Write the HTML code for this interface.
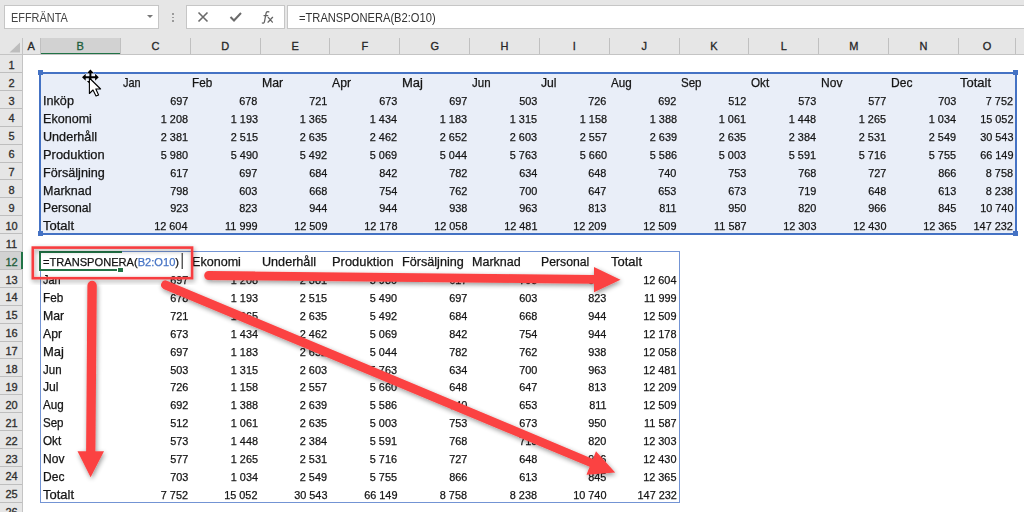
<!DOCTYPE html>
<html><head><meta charset="utf-8"><style>
html,body{margin:0;padding:0;}
body{width:1024px;height:512px;overflow:hidden;position:relative;background:#fff;font-family:"Liberation Sans",sans-serif;}
.a{position:absolute;}
.t{position:absolute;white-space:pre;font-size:12.2px;line-height:16px;color:#141414;-webkit-text-stroke-width:0.25px;}
.hd{position:absolute;font-size:11px;line-height:16px;color:#262626;text-align:center;-webkit-text-stroke-width:0.3px;}
</style></head><body>

<div class="a" style="left:0;top:0;width:1024px;height:54px;background:#e6e6e6"></div>
<div class="a" style="left:4px;top:5px;width:153px;height:22px;background:#fff;border:1px solid #c6c6c6"></div>
<div class="a" style="left:11px;top:9.5px;font-size:12.2px;line-height:16px;color:#444;white-space:pre;transform:scaleX(0.895);transform-origin:0 0">EFFRÄNTA</div>
<div class="a" style="left:147px;top:14.5px;width:0;height:0;border-left:3px solid transparent;border-right:3px solid transparent;border-top:3px solid #777"></div>
<div class="a" style="left:172px;top:13px;width:1.5px;height:1.5px;background:#9a9a9a"></div>
<div class="a" style="left:172px;top:16.5px;width:1.5px;height:1.5px;background:#9a9a9a"></div>
<div class="a" style="left:172px;top:20px;width:1.5px;height:1.5px;background:#9a9a9a"></div>
<div class="a" style="left:186px;top:5px;width:97px;height:22px;background:#fff;border:1px solid #c6c6c6"></div>
<svg class="a" style="left:196px;top:11px" width="14" height="12" viewBox="0 0 14 12"><path d="M2.5 1.5 L11.5 10.5 M11.5 1.5 L2.5 10.5" stroke="#6a6a6a" stroke-width="1.6" fill="none"/></svg>
<svg class="a" style="left:229px;top:11px" width="14" height="12" viewBox="0 0 14 12"><path d="M1.5 6 L5 9.5 L12 2" stroke="#6a6a6a" stroke-width="2" fill="none"/></svg>
<svg class="a" style="left:261px;top:10px" width="14" height="14" viewBox="0 0 14 14"><path d="M7.8 1.9 C6.4 1.2 5.3 1.9 5 3.6 L3.5 11.6 C3.2 13 2.4 13.4 1.3 13 M3 5.5 L6.8 5.5" stroke="#636363" stroke-width="1.25" fill="none" stroke-linecap="round"/><path d="M7.2 7.3 L11.4 12.2 M11.6 7.3 L7 12.2" stroke="#636363" stroke-width="1.25" fill="none" stroke-linecap="round"/></svg>
<div class="a" style="left:287px;top:5px;width:740px;height:22px;background:#fff;border:1px solid #c6c6c6"></div>
<div class="a" style="left:298.5px;top:9.5px;font-size:12.2px;line-height:16px;color:#333;white-space:pre;transform:scaleX(0.915);transform-origin:0 0">=TRANSPONERA(B2:O10)</div>
<div class="a" style="left:40px;top:37.5px;width:80.5px;height:16.5px;background:#d2d2d2"></div>
<div class="a" style="left:40px;top:53px;width:80.5px;height:2px;background:#217346"></div>
<div class="hd" style="left:22.40px;width:17.60px;top:38.0px;color:#262626">A</div>
<div class="hd" style="left:40.00px;width:80.50px;top:38.0px;color:#1d5c3a">B</div>
<div class="hd" style="left:120.50px;width:69.83px;top:38.0px;color:#262626">C</div>
<div class="hd" style="left:190.33px;width:69.83px;top:38.0px;color:#262626">D</div>
<div class="hd" style="left:260.16px;width:69.83px;top:38.0px;color:#262626">E</div>
<div class="hd" style="left:329.99px;width:69.83px;top:38.0px;color:#262626">F</div>
<div class="hd" style="left:399.82px;width:69.83px;top:38.0px;color:#262626">G</div>
<div class="hd" style="left:469.65px;width:69.83px;top:38.0px;color:#262626">H</div>
<div class="hd" style="left:539.48px;width:69.83px;top:38.0px;color:#262626">I</div>
<div class="hd" style="left:609.31px;width:69.83px;top:38.0px;color:#262626">J</div>
<div class="hd" style="left:679.14px;width:69.83px;top:38.0px;color:#262626">K</div>
<div class="hd" style="left:748.97px;width:69.83px;top:38.0px;color:#262626">L</div>
<div class="hd" style="left:818.80px;width:69.83px;top:38.0px;color:#262626">M</div>
<div class="hd" style="left:888.63px;width:69.83px;top:38.0px;color:#262626">N</div>
<div class="hd" style="left:958.46px;width:57.04px;top:38.0px;color:#262626">O</div>
<div class="a" style="left:39.50px;top:37.5px;width:1px;height:16.5px;background:#c0c0c0"></div>
<div class="a" style="left:120.00px;top:37.5px;width:1px;height:16.5px;background:#c0c0c0"></div>
<div class="a" style="left:189.83px;top:37.5px;width:1px;height:16.5px;background:#c0c0c0"></div>
<div class="a" style="left:259.66px;top:37.5px;width:1px;height:16.5px;background:#c0c0c0"></div>
<div class="a" style="left:329.49px;top:37.5px;width:1px;height:16.5px;background:#c0c0c0"></div>
<div class="a" style="left:399.32px;top:37.5px;width:1px;height:16.5px;background:#c0c0c0"></div>
<div class="a" style="left:469.15px;top:37.5px;width:1px;height:16.5px;background:#c0c0c0"></div>
<div class="a" style="left:538.98px;top:37.5px;width:1px;height:16.5px;background:#c0c0c0"></div>
<div class="a" style="left:608.81px;top:37.5px;width:1px;height:16.5px;background:#c0c0c0"></div>
<div class="a" style="left:678.64px;top:37.5px;width:1px;height:16.5px;background:#c0c0c0"></div>
<div class="a" style="left:748.47px;top:37.5px;width:1px;height:16.5px;background:#c0c0c0"></div>
<div class="a" style="left:818.30px;top:37.5px;width:1px;height:16.5px;background:#c0c0c0"></div>
<div class="a" style="left:888.13px;top:37.5px;width:1px;height:16.5px;background:#c0c0c0"></div>
<div class="a" style="left:957.96px;top:37.5px;width:1px;height:16.5px;background:#c0c0c0"></div>
<div class="a" style="left:1015.00px;top:37.5px;width:1px;height:16.5px;background:#c0c0c0"></div>
<div class="a" style="left:0;top:54px;width:1024px;height:1px;background:#c4c4c4"></div>
<svg class="a" style="left:9px;top:42px" width="12" height="11" viewBox="0 0 12 11"><path d="M11 0.5 L11 10.5 L0.5 10.5 Z" fill="#bdbdbd"/></svg>
<div class="a" style="left:0;top:55px;width:22px;height:457px;background:#e6e6e6"></div>
<div class="a" style="left:22px;top:37.5px;width:1px;height:475px;background:#c4c4c4"></div>
<div class="a" style="left:0;top:251.50px;width:22px;height:17.90px;background:#d2d2d2"></div>
<div class="a" style="left:20.5px;top:251.50px;width:2px;height:17.90px;background:#217346"></div>
<div class="a" style="left:0;top:72.00px;width:22px;height:1px;background:#bebebe"></div>
<div class="hd" style="left:0.5px;width:22px;top:56.70px;color:#2e2e2e">1</div>
<div class="a" style="left:0;top:89.90px;width:22px;height:1px;background:#bebebe"></div>
<div class="hd" style="left:0.5px;width:22px;top:74.60px;color:#2e2e2e">2</div>
<div class="a" style="left:0;top:107.80px;width:22px;height:1px;background:#bebebe"></div>
<div class="hd" style="left:0.5px;width:22px;top:92.50px;color:#2e2e2e">3</div>
<div class="a" style="left:0;top:125.70px;width:22px;height:1px;background:#bebebe"></div>
<div class="hd" style="left:0.5px;width:22px;top:110.40px;color:#2e2e2e">4</div>
<div class="a" style="left:0;top:143.60px;width:22px;height:1px;background:#bebebe"></div>
<div class="hd" style="left:0.5px;width:22px;top:128.30px;color:#2e2e2e">5</div>
<div class="a" style="left:0;top:161.50px;width:22px;height:1px;background:#bebebe"></div>
<div class="hd" style="left:0.5px;width:22px;top:146.20px;color:#2e2e2e">6</div>
<div class="a" style="left:0;top:179.40px;width:22px;height:1px;background:#bebebe"></div>
<div class="hd" style="left:0.5px;width:22px;top:164.10px;color:#2e2e2e">7</div>
<div class="a" style="left:0;top:197.30px;width:22px;height:1px;background:#bebebe"></div>
<div class="hd" style="left:0.5px;width:22px;top:182.00px;color:#2e2e2e">8</div>
<div class="a" style="left:0;top:215.20px;width:22px;height:1px;background:#bebebe"></div>
<div class="hd" style="left:0.5px;width:22px;top:199.90px;color:#2e2e2e">9</div>
<div class="a" style="left:0;top:233.10px;width:22px;height:1px;background:#bebebe"></div>
<div class="hd" style="left:0.5px;width:22px;top:217.80px;color:#2e2e2e">10</div>
<div class="a" style="left:0;top:251.00px;width:22px;height:1px;background:#bebebe"></div>
<div class="hd" style="left:0.5px;width:22px;top:235.70px;color:#2e2e2e">11</div>
<div class="a" style="left:0;top:268.90px;width:22px;height:1px;background:#bebebe"></div>
<div class="hd" style="left:0.5px;width:22px;top:253.60px;color:#1d5c3a">12</div>
<div class="a" style="left:0;top:286.80px;width:22px;height:1px;background:#bebebe"></div>
<div class="hd" style="left:0.5px;width:22px;top:271.50px;color:#2e2e2e">13</div>
<div class="a" style="left:0;top:304.70px;width:22px;height:1px;background:#bebebe"></div>
<div class="hd" style="left:0.5px;width:22px;top:289.40px;color:#2e2e2e">14</div>
<div class="a" style="left:0;top:322.60px;width:22px;height:1px;background:#bebebe"></div>
<div class="hd" style="left:0.5px;width:22px;top:307.30px;color:#2e2e2e">15</div>
<div class="a" style="left:0;top:340.50px;width:22px;height:1px;background:#bebebe"></div>
<div class="hd" style="left:0.5px;width:22px;top:325.20px;color:#2e2e2e">16</div>
<div class="a" style="left:0;top:358.40px;width:22px;height:1px;background:#bebebe"></div>
<div class="hd" style="left:0.5px;width:22px;top:343.10px;color:#2e2e2e">17</div>
<div class="a" style="left:0;top:376.30px;width:22px;height:1px;background:#bebebe"></div>
<div class="hd" style="left:0.5px;width:22px;top:361.00px;color:#2e2e2e">18</div>
<div class="a" style="left:0;top:394.20px;width:22px;height:1px;background:#bebebe"></div>
<div class="hd" style="left:0.5px;width:22px;top:378.90px;color:#2e2e2e">19</div>
<div class="a" style="left:0;top:412.10px;width:22px;height:1px;background:#bebebe"></div>
<div class="hd" style="left:0.5px;width:22px;top:396.80px;color:#2e2e2e">20</div>
<div class="a" style="left:0;top:430.00px;width:22px;height:1px;background:#bebebe"></div>
<div class="hd" style="left:0.5px;width:22px;top:414.70px;color:#2e2e2e">21</div>
<div class="a" style="left:0;top:447.90px;width:22px;height:1px;background:#bebebe"></div>
<div class="hd" style="left:0.5px;width:22px;top:432.60px;color:#2e2e2e">22</div>
<div class="a" style="left:0;top:465.80px;width:22px;height:1px;background:#bebebe"></div>
<div class="hd" style="left:0.5px;width:22px;top:450.50px;color:#2e2e2e">23</div>
<div class="a" style="left:0;top:483.70px;width:22px;height:1px;background:#bebebe"></div>
<div class="hd" style="left:0.5px;width:22px;top:468.40px;color:#2e2e2e">24</div>
<div class="a" style="left:0;top:501.60px;width:22px;height:1px;background:#bebebe"></div>
<div class="hd" style="left:0.5px;width:22px;top:486.30px;color:#2e2e2e">25</div>
<div class="a" style="left:0;top:519.50px;width:22px;height:1px;background:#bebebe"></div>
<div class="hd" style="left:0.5px;width:22px;top:504.20px;color:#2e2e2e">26</div>
<div class="a" style="left:40.00px;top:72.50px;width:975.50px;height:161.10px;background:#e9eef8"></div>
<div class="a" style="left:39.00px;top:71.50px;width:977.50px;height:2px;background:#4472c4"></div>
<div class="a" style="left:39.00px;top:232.60px;width:977.50px;height:2px;background:#4472c4"></div>
<div class="a" style="left:39.00px;top:71.50px;width:2px;height:163.10px;background:#4472c4"></div>
<div class="a" style="left:1014.50px;top:71.50px;width:2px;height:163.10px;background:#4472c4"></div>
<div class="a" style="left:37.50px;top:70.00px;width:5px;height:5px;background:#4472c4"></div>
<div class="a" style="left:1013.00px;top:70.00px;width:5px;height:5px;background:#4472c4"></div>
<div class="a" style="left:37.50px;top:231.10px;width:5px;height:5px;background:#4472c4"></div>
<div class="a" style="left:1013.00px;top:231.10px;width:5px;height:5px;background:#4472c4"></div>
<div class="t" style="top:75.10px;left:122.50px;transform:scaleX(0.896);transform-origin:0 0;">Jan</div>
<div class="t" style="top:75.10px;left:192.33px;transform:scaleX(0.962);transform-origin:0 0;">Feb</div>
<div class="t" style="top:75.10px;left:262.16px;transform:scaleX(1.007);transform-origin:0 0;">Mar</div>
<div class="t" style="top:75.10px;left:331.99px;transform:scaleX(1.002);transform-origin:0 0;">Apr</div>
<div class="t" style="top:75.10px;left:401.82px;transform:scaleX(1.065);transform-origin:0 0;">Maj</div>
<div class="t" style="top:75.10px;left:471.65px;transform:scaleX(0.944);transform-origin:0 0;">Jun</div>
<div class="t" style="top:75.10px;left:541.48px;transform:scaleX(0.999);transform-origin:0 0;">Jul</div>
<div class="t" style="top:75.10px;left:611.31px;transform:scaleX(0.956);transform-origin:0 0;">Aug</div>
<div class="t" style="top:75.10px;left:681.14px;transform:scaleX(0.947);transform-origin:0 0;">Sep</div>
<div class="t" style="top:75.10px;left:750.97px;transform:scaleX(0.96);transform-origin:0 0;">Okt</div>
<div class="t" style="top:75.10px;left:820.80px;transform:scaleX(0.987);transform-origin:0 0;">Nov</div>
<div class="t" style="top:75.10px;left:890.63px;transform:scaleX(0.987);transform-origin:0 0;">Dec</div>
<div class="t" style="top:75.10px;left:960.46px;transform:scaleX(1.065);transform-origin:0 0;">Totalt</div>
<div class="t" style="top:93.00px;left:43.00px;transform:scaleX(1.037);transform-origin:0 0;">Inköp</div>
<div class="t" style="top:93.00px;right:836.17px;transform:scaleX(0.939);transform-origin:100% 0;font-size:11.6px;">697</div>
<div class="t" style="top:93.00px;right:766.34px;transform:scaleX(0.939);transform-origin:100% 0;font-size:11.6px;">678</div>
<div class="t" style="top:93.00px;right:696.51px;transform:scaleX(0.939);transform-origin:100% 0;font-size:11.6px;">721</div>
<div class="t" style="top:93.00px;right:626.68px;transform:scaleX(0.939);transform-origin:100% 0;font-size:11.6px;">673</div>
<div class="t" style="top:93.00px;right:556.85px;transform:scaleX(0.939);transform-origin:100% 0;font-size:11.6px;">697</div>
<div class="t" style="top:93.00px;right:487.02px;transform:scaleX(0.939);transform-origin:100% 0;font-size:11.6px;">503</div>
<div class="t" style="top:93.00px;right:417.19px;transform:scaleX(0.939);transform-origin:100% 0;font-size:11.6px;">726</div>
<div class="t" style="top:93.00px;right:347.36px;transform:scaleX(0.939);transform-origin:100% 0;font-size:11.6px;">692</div>
<div class="t" style="top:93.00px;right:277.53px;transform:scaleX(0.939);transform-origin:100% 0;font-size:11.6px;">512</div>
<div class="t" style="top:93.00px;right:207.70px;transform:scaleX(0.939);transform-origin:100% 0;font-size:11.6px;">573</div>
<div class="t" style="top:93.00px;right:137.87px;transform:scaleX(0.939);transform-origin:100% 0;font-size:11.6px;">577</div>
<div class="t" style="top:93.00px;right:68.04px;transform:scaleX(0.939);transform-origin:100% 0;font-size:11.6px;">703</div>
<div class="t" style="top:93.00px;right:11.00px;transform:scaleX(0.939);transform-origin:100% 0;font-size:11.6px;">7&#160;752</div>
<div class="t" style="top:110.90px;left:43.00px;transform:scaleX(1.031);transform-origin:0 0;">Ekonomi</div>
<div class="t" style="top:110.90px;right:836.17px;transform:scaleX(0.939);transform-origin:100% 0;font-size:11.6px;">1&#160;208</div>
<div class="t" style="top:110.90px;right:766.34px;transform:scaleX(0.939);transform-origin:100% 0;font-size:11.6px;">1&#160;193</div>
<div class="t" style="top:110.90px;right:696.51px;transform:scaleX(0.939);transform-origin:100% 0;font-size:11.6px;">1&#160;365</div>
<div class="t" style="top:110.90px;right:626.68px;transform:scaleX(0.939);transform-origin:100% 0;font-size:11.6px;">1&#160;434</div>
<div class="t" style="top:110.90px;right:556.85px;transform:scaleX(0.939);transform-origin:100% 0;font-size:11.6px;">1&#160;183</div>
<div class="t" style="top:110.90px;right:487.02px;transform:scaleX(0.939);transform-origin:100% 0;font-size:11.6px;">1&#160;315</div>
<div class="t" style="top:110.90px;right:417.19px;transform:scaleX(0.939);transform-origin:100% 0;font-size:11.6px;">1&#160;158</div>
<div class="t" style="top:110.90px;right:347.36px;transform:scaleX(0.939);transform-origin:100% 0;font-size:11.6px;">1&#160;388</div>
<div class="t" style="top:110.90px;right:277.53px;transform:scaleX(0.939);transform-origin:100% 0;font-size:11.6px;">1&#160;061</div>
<div class="t" style="top:110.90px;right:207.70px;transform:scaleX(0.939);transform-origin:100% 0;font-size:11.6px;">1&#160;448</div>
<div class="t" style="top:110.90px;right:137.87px;transform:scaleX(0.939);transform-origin:100% 0;font-size:11.6px;">1&#160;265</div>
<div class="t" style="top:110.90px;right:68.04px;transform:scaleX(0.939);transform-origin:100% 0;font-size:11.6px;">1&#160;034</div>
<div class="t" style="top:110.90px;right:11.00px;transform:scaleX(0.939);transform-origin:100% 0;font-size:11.6px;">15&#160;052</div>
<div class="t" style="top:128.80px;left:43.00px;transform:scaleX(1.035);transform-origin:0 0;">Underhåll</div>
<div class="t" style="top:128.80px;right:836.17px;transform:scaleX(0.939);transform-origin:100% 0;font-size:11.6px;">2&#160;381</div>
<div class="t" style="top:128.80px;right:766.34px;transform:scaleX(0.939);transform-origin:100% 0;font-size:11.6px;">2&#160;515</div>
<div class="t" style="top:128.80px;right:696.51px;transform:scaleX(0.939);transform-origin:100% 0;font-size:11.6px;">2&#160;635</div>
<div class="t" style="top:128.80px;right:626.68px;transform:scaleX(0.939);transform-origin:100% 0;font-size:11.6px;">2&#160;462</div>
<div class="t" style="top:128.80px;right:556.85px;transform:scaleX(0.939);transform-origin:100% 0;font-size:11.6px;">2&#160;652</div>
<div class="t" style="top:128.80px;right:487.02px;transform:scaleX(0.939);transform-origin:100% 0;font-size:11.6px;">2&#160;603</div>
<div class="t" style="top:128.80px;right:417.19px;transform:scaleX(0.939);transform-origin:100% 0;font-size:11.6px;">2&#160;557</div>
<div class="t" style="top:128.80px;right:347.36px;transform:scaleX(0.939);transform-origin:100% 0;font-size:11.6px;">2&#160;639</div>
<div class="t" style="top:128.80px;right:277.53px;transform:scaleX(0.939);transform-origin:100% 0;font-size:11.6px;">2&#160;635</div>
<div class="t" style="top:128.80px;right:207.70px;transform:scaleX(0.939);transform-origin:100% 0;font-size:11.6px;">2&#160;384</div>
<div class="t" style="top:128.80px;right:137.87px;transform:scaleX(0.939);transform-origin:100% 0;font-size:11.6px;">2&#160;531</div>
<div class="t" style="top:128.80px;right:68.04px;transform:scaleX(0.939);transform-origin:100% 0;font-size:11.6px;">2&#160;549</div>
<div class="t" style="top:128.80px;right:11.00px;transform:scaleX(0.939);transform-origin:100% 0;font-size:11.6px;">30&#160;543</div>
<div class="t" style="top:146.70px;left:43.00px;transform:scaleX(1.057);transform-origin:0 0;">Produktion</div>
<div class="t" style="top:146.70px;right:836.17px;transform:scaleX(0.939);transform-origin:100% 0;font-size:11.6px;">5&#160;980</div>
<div class="t" style="top:146.70px;right:766.34px;transform:scaleX(0.939);transform-origin:100% 0;font-size:11.6px;">5&#160;490</div>
<div class="t" style="top:146.70px;right:696.51px;transform:scaleX(0.939);transform-origin:100% 0;font-size:11.6px;">5&#160;492</div>
<div class="t" style="top:146.70px;right:626.68px;transform:scaleX(0.939);transform-origin:100% 0;font-size:11.6px;">5&#160;069</div>
<div class="t" style="top:146.70px;right:556.85px;transform:scaleX(0.939);transform-origin:100% 0;font-size:11.6px;">5&#160;044</div>
<div class="t" style="top:146.70px;right:487.02px;transform:scaleX(0.939);transform-origin:100% 0;font-size:11.6px;">5&#160;763</div>
<div class="t" style="top:146.70px;right:417.19px;transform:scaleX(0.939);transform-origin:100% 0;font-size:11.6px;">5&#160;660</div>
<div class="t" style="top:146.70px;right:347.36px;transform:scaleX(0.939);transform-origin:100% 0;font-size:11.6px;">5&#160;586</div>
<div class="t" style="top:146.70px;right:277.53px;transform:scaleX(0.939);transform-origin:100% 0;font-size:11.6px;">5&#160;003</div>
<div class="t" style="top:146.70px;right:207.70px;transform:scaleX(0.939);transform-origin:100% 0;font-size:11.6px;">5&#160;591</div>
<div class="t" style="top:146.70px;right:137.87px;transform:scaleX(0.939);transform-origin:100% 0;font-size:11.6px;">5&#160;716</div>
<div class="t" style="top:146.70px;right:68.04px;transform:scaleX(0.939);transform-origin:100% 0;font-size:11.6px;">5&#160;755</div>
<div class="t" style="top:146.70px;right:11.00px;transform:scaleX(0.939);transform-origin:100% 0;font-size:11.6px;">66&#160;149</div>
<div class="t" style="top:164.60px;left:43.00px;transform:scaleX(1.037);transform-origin:0 0;">Försäljning</div>
<div class="t" style="top:164.60px;right:836.17px;transform:scaleX(0.939);transform-origin:100% 0;font-size:11.6px;">617</div>
<div class="t" style="top:164.60px;right:766.34px;transform:scaleX(0.939);transform-origin:100% 0;font-size:11.6px;">697</div>
<div class="t" style="top:164.60px;right:696.51px;transform:scaleX(0.939);transform-origin:100% 0;font-size:11.6px;">684</div>
<div class="t" style="top:164.60px;right:626.68px;transform:scaleX(0.939);transform-origin:100% 0;font-size:11.6px;">842</div>
<div class="t" style="top:164.60px;right:556.85px;transform:scaleX(0.939);transform-origin:100% 0;font-size:11.6px;">782</div>
<div class="t" style="top:164.60px;right:487.02px;transform:scaleX(0.939);transform-origin:100% 0;font-size:11.6px;">634</div>
<div class="t" style="top:164.60px;right:417.19px;transform:scaleX(0.939);transform-origin:100% 0;font-size:11.6px;">648</div>
<div class="t" style="top:164.60px;right:347.36px;transform:scaleX(0.939);transform-origin:100% 0;font-size:11.6px;">740</div>
<div class="t" style="top:164.60px;right:277.53px;transform:scaleX(0.939);transform-origin:100% 0;font-size:11.6px;">753</div>
<div class="t" style="top:164.60px;right:207.70px;transform:scaleX(0.939);transform-origin:100% 0;font-size:11.6px;">768</div>
<div class="t" style="top:164.60px;right:137.87px;transform:scaleX(0.939);transform-origin:100% 0;font-size:11.6px;">727</div>
<div class="t" style="top:164.60px;right:68.04px;transform:scaleX(0.939);transform-origin:100% 0;font-size:11.6px;">866</div>
<div class="t" style="top:164.60px;right:11.00px;transform:scaleX(0.939);transform-origin:100% 0;font-size:11.6px;">8&#160;758</div>
<div class="t" style="top:182.50px;left:43.00px;transform:scaleX(1.027);transform-origin:0 0;">Marknad</div>
<div class="t" style="top:182.50px;right:836.17px;transform:scaleX(0.939);transform-origin:100% 0;font-size:11.6px;">798</div>
<div class="t" style="top:182.50px;right:766.34px;transform:scaleX(0.939);transform-origin:100% 0;font-size:11.6px;">603</div>
<div class="t" style="top:182.50px;right:696.51px;transform:scaleX(0.939);transform-origin:100% 0;font-size:11.6px;">668</div>
<div class="t" style="top:182.50px;right:626.68px;transform:scaleX(0.939);transform-origin:100% 0;font-size:11.6px;">754</div>
<div class="t" style="top:182.50px;right:556.85px;transform:scaleX(0.939);transform-origin:100% 0;font-size:11.6px;">762</div>
<div class="t" style="top:182.50px;right:487.02px;transform:scaleX(0.939);transform-origin:100% 0;font-size:11.6px;">700</div>
<div class="t" style="top:182.50px;right:417.19px;transform:scaleX(0.939);transform-origin:100% 0;font-size:11.6px;">647</div>
<div class="t" style="top:182.50px;right:347.36px;transform:scaleX(0.939);transform-origin:100% 0;font-size:11.6px;">653</div>
<div class="t" style="top:182.50px;right:277.53px;transform:scaleX(0.939);transform-origin:100% 0;font-size:11.6px;">673</div>
<div class="t" style="top:182.50px;right:207.70px;transform:scaleX(0.939);transform-origin:100% 0;font-size:11.6px;">719</div>
<div class="t" style="top:182.50px;right:137.87px;transform:scaleX(0.939);transform-origin:100% 0;font-size:11.6px;">648</div>
<div class="t" style="top:182.50px;right:68.04px;transform:scaleX(0.939);transform-origin:100% 0;font-size:11.6px;">613</div>
<div class="t" style="top:182.50px;right:11.00px;transform:scaleX(0.939);transform-origin:100% 0;font-size:11.6px;">8&#160;238</div>
<div class="t" style="top:200.40px;left:43.00px;transform:scaleX(1.003);transform-origin:0 0;">Personal</div>
<div class="t" style="top:200.40px;right:836.17px;transform:scaleX(0.939);transform-origin:100% 0;font-size:11.6px;">923</div>
<div class="t" style="top:200.40px;right:766.34px;transform:scaleX(0.939);transform-origin:100% 0;font-size:11.6px;">823</div>
<div class="t" style="top:200.40px;right:696.51px;transform:scaleX(0.939);transform-origin:100% 0;font-size:11.6px;">944</div>
<div class="t" style="top:200.40px;right:626.68px;transform:scaleX(0.939);transform-origin:100% 0;font-size:11.6px;">944</div>
<div class="t" style="top:200.40px;right:556.85px;transform:scaleX(0.939);transform-origin:100% 0;font-size:11.6px;">938</div>
<div class="t" style="top:200.40px;right:487.02px;transform:scaleX(0.939);transform-origin:100% 0;font-size:11.6px;">963</div>
<div class="t" style="top:200.40px;right:417.19px;transform:scaleX(0.939);transform-origin:100% 0;font-size:11.6px;">813</div>
<div class="t" style="top:200.40px;right:347.36px;transform:scaleX(0.939);transform-origin:100% 0;font-size:11.6px;">811</div>
<div class="t" style="top:200.40px;right:277.53px;transform:scaleX(0.939);transform-origin:100% 0;font-size:11.6px;">950</div>
<div class="t" style="top:200.40px;right:207.70px;transform:scaleX(0.939);transform-origin:100% 0;font-size:11.6px;">820</div>
<div class="t" style="top:200.40px;right:137.87px;transform:scaleX(0.939);transform-origin:100% 0;font-size:11.6px;">966</div>
<div class="t" style="top:200.40px;right:68.04px;transform:scaleX(0.939);transform-origin:100% 0;font-size:11.6px;">845</div>
<div class="t" style="top:200.40px;right:11.00px;transform:scaleX(0.939);transform-origin:100% 0;font-size:11.6px;">10&#160;740</div>
<div class="t" style="top:218.30px;left:43.00px;transform:scaleX(1.065);transform-origin:0 0;">Totalt</div>
<div class="t" style="top:218.30px;right:836.17px;transform:scaleX(0.939);transform-origin:100% 0;font-size:11.6px;">12&#160;604</div>
<div class="t" style="top:218.30px;right:766.34px;transform:scaleX(0.939);transform-origin:100% 0;font-size:11.6px;">11&#160;999</div>
<div class="t" style="top:218.30px;right:696.51px;transform:scaleX(0.939);transform-origin:100% 0;font-size:11.6px;">12&#160;509</div>
<div class="t" style="top:218.30px;right:626.68px;transform:scaleX(0.939);transform-origin:100% 0;font-size:11.6px;">12&#160;178</div>
<div class="t" style="top:218.30px;right:556.85px;transform:scaleX(0.939);transform-origin:100% 0;font-size:11.6px;">12&#160;058</div>
<div class="t" style="top:218.30px;right:487.02px;transform:scaleX(0.939);transform-origin:100% 0;font-size:11.6px;">12&#160;481</div>
<div class="t" style="top:218.30px;right:417.19px;transform:scaleX(0.939);transform-origin:100% 0;font-size:11.6px;">12&#160;209</div>
<div class="t" style="top:218.30px;right:347.36px;transform:scaleX(0.939);transform-origin:100% 0;font-size:11.6px;">12&#160;509</div>
<div class="t" style="top:218.30px;right:277.53px;transform:scaleX(0.939);transform-origin:100% 0;font-size:11.6px;">11&#160;587</div>
<div class="t" style="top:218.30px;right:207.70px;transform:scaleX(0.939);transform-origin:100% 0;font-size:11.6px;">12&#160;303</div>
<div class="t" style="top:218.30px;right:137.87px;transform:scaleX(0.939);transform-origin:100% 0;font-size:11.6px;">12&#160;430</div>
<div class="t" style="top:218.30px;right:68.04px;transform:scaleX(0.939);transform-origin:100% 0;font-size:11.6px;">12&#160;365</div>
<div class="t" style="top:218.30px;right:11.00px;transform:scaleX(0.939);transform-origin:100% 0;font-size:11.6px;">147&#160;232</div>
<div class="a" style="left:39.50px;top:251.00px;width:638.14px;height:249.60px;border:1px solid #7394d4"></div>
<div class="t" style="top:254.10px;left:192.33px;transform:scaleX(1.031);transform-origin:0 0;">Ekonomi</div>
<div class="t" style="top:254.10px;left:262.16px;transform:scaleX(1.035);transform-origin:0 0;">Underhåll</div>
<div class="t" style="top:254.10px;left:331.99px;transform:scaleX(1.057);transform-origin:0 0;">Produktion</div>
<div class="t" style="top:254.10px;left:401.82px;transform:scaleX(1.037);transform-origin:0 0;">Försäljning</div>
<div class="t" style="top:254.10px;left:471.65px;transform:scaleX(1.027);transform-origin:0 0;">Marknad</div>
<div class="t" style="top:254.10px;left:541.48px;transform:scaleX(1.003);transform-origin:0 0;">Personal</div>
<div class="t" style="top:254.10px;left:611.31px;transform:scaleX(1.065);transform-origin:0 0;">Totalt</div>
<div class="t" style="top:272.00px;left:43.00px;transform:scaleX(0.896);transform-origin:0 0;">Jan</div>
<div class="t" style="top:272.00px;right:836.17px;transform:scaleX(0.939);transform-origin:100% 0;font-size:11.6px;">697</div>
<div class="t" style="top:272.00px;right:766.34px;transform:scaleX(0.939);transform-origin:100% 0;font-size:11.6px;">1&#160;208</div>
<div class="t" style="top:272.00px;right:696.51px;transform:scaleX(0.939);transform-origin:100% 0;font-size:11.6px;">2&#160;381</div>
<div class="t" style="top:272.00px;right:626.68px;transform:scaleX(0.939);transform-origin:100% 0;font-size:11.6px;">5&#160;980</div>
<div class="t" style="top:272.00px;right:556.85px;transform:scaleX(0.939);transform-origin:100% 0;font-size:11.6px;">617</div>
<div class="t" style="top:272.00px;right:487.02px;transform:scaleX(0.939);transform-origin:100% 0;font-size:11.6px;">798</div>
<div class="t" style="top:272.00px;right:417.19px;transform:scaleX(0.939);transform-origin:100% 0;font-size:11.6px;">923</div>
<div class="t" style="top:272.00px;right:347.36px;transform:scaleX(0.939);transform-origin:100% 0;font-size:11.6px;">12&#160;604</div>
<div class="t" style="top:289.90px;left:43.00px;transform:scaleX(0.962);transform-origin:0 0;">Feb</div>
<div class="t" style="top:289.90px;right:836.17px;transform:scaleX(0.939);transform-origin:100% 0;font-size:11.6px;">678</div>
<div class="t" style="top:289.90px;right:766.34px;transform:scaleX(0.939);transform-origin:100% 0;font-size:11.6px;">1&#160;193</div>
<div class="t" style="top:289.90px;right:696.51px;transform:scaleX(0.939);transform-origin:100% 0;font-size:11.6px;">2&#160;515</div>
<div class="t" style="top:289.90px;right:626.68px;transform:scaleX(0.939);transform-origin:100% 0;font-size:11.6px;">5&#160;490</div>
<div class="t" style="top:289.90px;right:556.85px;transform:scaleX(0.939);transform-origin:100% 0;font-size:11.6px;">697</div>
<div class="t" style="top:289.90px;right:487.02px;transform:scaleX(0.939);transform-origin:100% 0;font-size:11.6px;">603</div>
<div class="t" style="top:289.90px;right:417.19px;transform:scaleX(0.939);transform-origin:100% 0;font-size:11.6px;">823</div>
<div class="t" style="top:289.90px;right:347.36px;transform:scaleX(0.939);transform-origin:100% 0;font-size:11.6px;">11&#160;999</div>
<div class="t" style="top:307.80px;left:43.00px;transform:scaleX(1.007);transform-origin:0 0;">Mar</div>
<div class="t" style="top:307.80px;right:836.17px;transform:scaleX(0.939);transform-origin:100% 0;font-size:11.6px;">721</div>
<div class="t" style="top:307.80px;right:766.34px;transform:scaleX(0.939);transform-origin:100% 0;font-size:11.6px;">1&#160;365</div>
<div class="t" style="top:307.80px;right:696.51px;transform:scaleX(0.939);transform-origin:100% 0;font-size:11.6px;">2&#160;635</div>
<div class="t" style="top:307.80px;right:626.68px;transform:scaleX(0.939);transform-origin:100% 0;font-size:11.6px;">5&#160;492</div>
<div class="t" style="top:307.80px;right:556.85px;transform:scaleX(0.939);transform-origin:100% 0;font-size:11.6px;">684</div>
<div class="t" style="top:307.80px;right:487.02px;transform:scaleX(0.939);transform-origin:100% 0;font-size:11.6px;">668</div>
<div class="t" style="top:307.80px;right:417.19px;transform:scaleX(0.939);transform-origin:100% 0;font-size:11.6px;">944</div>
<div class="t" style="top:307.80px;right:347.36px;transform:scaleX(0.939);transform-origin:100% 0;font-size:11.6px;">12&#160;509</div>
<div class="t" style="top:325.70px;left:43.00px;transform:scaleX(1.002);transform-origin:0 0;">Apr</div>
<div class="t" style="top:325.70px;right:836.17px;transform:scaleX(0.939);transform-origin:100% 0;font-size:11.6px;">673</div>
<div class="t" style="top:325.70px;right:766.34px;transform:scaleX(0.939);transform-origin:100% 0;font-size:11.6px;">1&#160;434</div>
<div class="t" style="top:325.70px;right:696.51px;transform:scaleX(0.939);transform-origin:100% 0;font-size:11.6px;">2&#160;462</div>
<div class="t" style="top:325.70px;right:626.68px;transform:scaleX(0.939);transform-origin:100% 0;font-size:11.6px;">5&#160;069</div>
<div class="t" style="top:325.70px;right:556.85px;transform:scaleX(0.939);transform-origin:100% 0;font-size:11.6px;">842</div>
<div class="t" style="top:325.70px;right:487.02px;transform:scaleX(0.939);transform-origin:100% 0;font-size:11.6px;">754</div>
<div class="t" style="top:325.70px;right:417.19px;transform:scaleX(0.939);transform-origin:100% 0;font-size:11.6px;">944</div>
<div class="t" style="top:325.70px;right:347.36px;transform:scaleX(0.939);transform-origin:100% 0;font-size:11.6px;">12&#160;178</div>
<div class="t" style="top:343.60px;left:43.00px;transform:scaleX(1.065);transform-origin:0 0;">Maj</div>
<div class="t" style="top:343.60px;right:836.17px;transform:scaleX(0.939);transform-origin:100% 0;font-size:11.6px;">697</div>
<div class="t" style="top:343.60px;right:766.34px;transform:scaleX(0.939);transform-origin:100% 0;font-size:11.6px;">1&#160;183</div>
<div class="t" style="top:343.60px;right:696.51px;transform:scaleX(0.939);transform-origin:100% 0;font-size:11.6px;">2&#160;652</div>
<div class="t" style="top:343.60px;right:626.68px;transform:scaleX(0.939);transform-origin:100% 0;font-size:11.6px;">5&#160;044</div>
<div class="t" style="top:343.60px;right:556.85px;transform:scaleX(0.939);transform-origin:100% 0;font-size:11.6px;">782</div>
<div class="t" style="top:343.60px;right:487.02px;transform:scaleX(0.939);transform-origin:100% 0;font-size:11.6px;">762</div>
<div class="t" style="top:343.60px;right:417.19px;transform:scaleX(0.939);transform-origin:100% 0;font-size:11.6px;">938</div>
<div class="t" style="top:343.60px;right:347.36px;transform:scaleX(0.939);transform-origin:100% 0;font-size:11.6px;">12&#160;058</div>
<div class="t" style="top:361.50px;left:43.00px;transform:scaleX(0.944);transform-origin:0 0;">Jun</div>
<div class="t" style="top:361.50px;right:836.17px;transform:scaleX(0.939);transform-origin:100% 0;font-size:11.6px;">503</div>
<div class="t" style="top:361.50px;right:766.34px;transform:scaleX(0.939);transform-origin:100% 0;font-size:11.6px;">1&#160;315</div>
<div class="t" style="top:361.50px;right:696.51px;transform:scaleX(0.939);transform-origin:100% 0;font-size:11.6px;">2&#160;603</div>
<div class="t" style="top:361.50px;right:626.68px;transform:scaleX(0.939);transform-origin:100% 0;font-size:11.6px;">5&#160;763</div>
<div class="t" style="top:361.50px;right:556.85px;transform:scaleX(0.939);transform-origin:100% 0;font-size:11.6px;">634</div>
<div class="t" style="top:361.50px;right:487.02px;transform:scaleX(0.939);transform-origin:100% 0;font-size:11.6px;">700</div>
<div class="t" style="top:361.50px;right:417.19px;transform:scaleX(0.939);transform-origin:100% 0;font-size:11.6px;">963</div>
<div class="t" style="top:361.50px;right:347.36px;transform:scaleX(0.939);transform-origin:100% 0;font-size:11.6px;">12&#160;481</div>
<div class="t" style="top:379.40px;left:43.00px;transform:scaleX(0.999);transform-origin:0 0;">Jul</div>
<div class="t" style="top:379.40px;right:836.17px;transform:scaleX(0.939);transform-origin:100% 0;font-size:11.6px;">726</div>
<div class="t" style="top:379.40px;right:766.34px;transform:scaleX(0.939);transform-origin:100% 0;font-size:11.6px;">1&#160;158</div>
<div class="t" style="top:379.40px;right:696.51px;transform:scaleX(0.939);transform-origin:100% 0;font-size:11.6px;">2&#160;557</div>
<div class="t" style="top:379.40px;right:626.68px;transform:scaleX(0.939);transform-origin:100% 0;font-size:11.6px;">5&#160;660</div>
<div class="t" style="top:379.40px;right:556.85px;transform:scaleX(0.939);transform-origin:100% 0;font-size:11.6px;">648</div>
<div class="t" style="top:379.40px;right:487.02px;transform:scaleX(0.939);transform-origin:100% 0;font-size:11.6px;">647</div>
<div class="t" style="top:379.40px;right:417.19px;transform:scaleX(0.939);transform-origin:100% 0;font-size:11.6px;">813</div>
<div class="t" style="top:379.40px;right:347.36px;transform:scaleX(0.939);transform-origin:100% 0;font-size:11.6px;">12&#160;209</div>
<div class="t" style="top:397.30px;left:43.00px;transform:scaleX(0.956);transform-origin:0 0;">Aug</div>
<div class="t" style="top:397.30px;right:836.17px;transform:scaleX(0.939);transform-origin:100% 0;font-size:11.6px;">692</div>
<div class="t" style="top:397.30px;right:766.34px;transform:scaleX(0.939);transform-origin:100% 0;font-size:11.6px;">1&#160;388</div>
<div class="t" style="top:397.30px;right:696.51px;transform:scaleX(0.939);transform-origin:100% 0;font-size:11.6px;">2&#160;639</div>
<div class="t" style="top:397.30px;right:626.68px;transform:scaleX(0.939);transform-origin:100% 0;font-size:11.6px;">5&#160;586</div>
<div class="t" style="top:397.30px;right:556.85px;transform:scaleX(0.939);transform-origin:100% 0;font-size:11.6px;">740</div>
<div class="t" style="top:397.30px;right:487.02px;transform:scaleX(0.939);transform-origin:100% 0;font-size:11.6px;">653</div>
<div class="t" style="top:397.30px;right:417.19px;transform:scaleX(0.939);transform-origin:100% 0;font-size:11.6px;">811</div>
<div class="t" style="top:397.30px;right:347.36px;transform:scaleX(0.939);transform-origin:100% 0;font-size:11.6px;">12&#160;509</div>
<div class="t" style="top:415.20px;left:43.00px;transform:scaleX(0.947);transform-origin:0 0;">Sep</div>
<div class="t" style="top:415.20px;right:836.17px;transform:scaleX(0.939);transform-origin:100% 0;font-size:11.6px;">512</div>
<div class="t" style="top:415.20px;right:766.34px;transform:scaleX(0.939);transform-origin:100% 0;font-size:11.6px;">1&#160;061</div>
<div class="t" style="top:415.20px;right:696.51px;transform:scaleX(0.939);transform-origin:100% 0;font-size:11.6px;">2&#160;635</div>
<div class="t" style="top:415.20px;right:626.68px;transform:scaleX(0.939);transform-origin:100% 0;font-size:11.6px;">5&#160;003</div>
<div class="t" style="top:415.20px;right:556.85px;transform:scaleX(0.939);transform-origin:100% 0;font-size:11.6px;">753</div>
<div class="t" style="top:415.20px;right:487.02px;transform:scaleX(0.939);transform-origin:100% 0;font-size:11.6px;">673</div>
<div class="t" style="top:415.20px;right:417.19px;transform:scaleX(0.939);transform-origin:100% 0;font-size:11.6px;">950</div>
<div class="t" style="top:415.20px;right:347.36px;transform:scaleX(0.939);transform-origin:100% 0;font-size:11.6px;">11&#160;587</div>
<div class="t" style="top:433.10px;left:43.00px;transform:scaleX(0.96);transform-origin:0 0;">Okt</div>
<div class="t" style="top:433.10px;right:836.17px;transform:scaleX(0.939);transform-origin:100% 0;font-size:11.6px;">573</div>
<div class="t" style="top:433.10px;right:766.34px;transform:scaleX(0.939);transform-origin:100% 0;font-size:11.6px;">1&#160;448</div>
<div class="t" style="top:433.10px;right:696.51px;transform:scaleX(0.939);transform-origin:100% 0;font-size:11.6px;">2&#160;384</div>
<div class="t" style="top:433.10px;right:626.68px;transform:scaleX(0.939);transform-origin:100% 0;font-size:11.6px;">5&#160;591</div>
<div class="t" style="top:433.10px;right:556.85px;transform:scaleX(0.939);transform-origin:100% 0;font-size:11.6px;">768</div>
<div class="t" style="top:433.10px;right:487.02px;transform:scaleX(0.939);transform-origin:100% 0;font-size:11.6px;">719</div>
<div class="t" style="top:433.10px;right:417.19px;transform:scaleX(0.939);transform-origin:100% 0;font-size:11.6px;">820</div>
<div class="t" style="top:433.10px;right:347.36px;transform:scaleX(0.939);transform-origin:100% 0;font-size:11.6px;">12&#160;303</div>
<div class="t" style="top:451.00px;left:43.00px;transform:scaleX(0.987);transform-origin:0 0;">Nov</div>
<div class="t" style="top:451.00px;right:836.17px;transform:scaleX(0.939);transform-origin:100% 0;font-size:11.6px;">577</div>
<div class="t" style="top:451.00px;right:766.34px;transform:scaleX(0.939);transform-origin:100% 0;font-size:11.6px;">1&#160;265</div>
<div class="t" style="top:451.00px;right:696.51px;transform:scaleX(0.939);transform-origin:100% 0;font-size:11.6px;">2&#160;531</div>
<div class="t" style="top:451.00px;right:626.68px;transform:scaleX(0.939);transform-origin:100% 0;font-size:11.6px;">5&#160;716</div>
<div class="t" style="top:451.00px;right:556.85px;transform:scaleX(0.939);transform-origin:100% 0;font-size:11.6px;">727</div>
<div class="t" style="top:451.00px;right:487.02px;transform:scaleX(0.939);transform-origin:100% 0;font-size:11.6px;">648</div>
<div class="t" style="top:451.00px;right:417.19px;transform:scaleX(0.939);transform-origin:100% 0;font-size:11.6px;">966</div>
<div class="t" style="top:451.00px;right:347.36px;transform:scaleX(0.939);transform-origin:100% 0;font-size:11.6px;">12&#160;430</div>
<div class="t" style="top:468.90px;left:43.00px;transform:scaleX(0.987);transform-origin:0 0;">Dec</div>
<div class="t" style="top:468.90px;right:836.17px;transform:scaleX(0.939);transform-origin:100% 0;font-size:11.6px;">703</div>
<div class="t" style="top:468.90px;right:766.34px;transform:scaleX(0.939);transform-origin:100% 0;font-size:11.6px;">1&#160;034</div>
<div class="t" style="top:468.90px;right:696.51px;transform:scaleX(0.939);transform-origin:100% 0;font-size:11.6px;">2&#160;549</div>
<div class="t" style="top:468.90px;right:626.68px;transform:scaleX(0.939);transform-origin:100% 0;font-size:11.6px;">5&#160;755</div>
<div class="t" style="top:468.90px;right:556.85px;transform:scaleX(0.939);transform-origin:100% 0;font-size:11.6px;">866</div>
<div class="t" style="top:468.90px;right:487.02px;transform:scaleX(0.939);transform-origin:100% 0;font-size:11.6px;">613</div>
<div class="t" style="top:468.90px;right:417.19px;transform:scaleX(0.939);transform-origin:100% 0;font-size:11.6px;">845</div>
<div class="t" style="top:468.90px;right:347.36px;transform:scaleX(0.939);transform-origin:100% 0;font-size:11.6px;">12&#160;365</div>
<div class="t" style="top:486.80px;left:43.00px;transform:scaleX(1.065);transform-origin:0 0;">Totalt</div>
<div class="t" style="top:486.80px;right:836.17px;transform:scaleX(0.939);transform-origin:100% 0;font-size:11.6px;">7&#160;752</div>
<div class="t" style="top:486.80px;right:766.34px;transform:scaleX(0.939);transform-origin:100% 0;font-size:11.6px;">15&#160;052</div>
<div class="t" style="top:486.80px;right:696.51px;transform:scaleX(0.939);transform-origin:100% 0;font-size:11.6px;">30&#160;543</div>
<div class="t" style="top:486.80px;right:626.68px;transform:scaleX(0.939);transform-origin:100% 0;font-size:11.6px;">66&#160;149</div>
<div class="t" style="top:486.80px;right:556.85px;transform:scaleX(0.939);transform-origin:100% 0;font-size:11.6px;">8&#160;758</div>
<div class="t" style="top:486.80px;right:487.02px;transform:scaleX(0.939);transform-origin:100% 0;font-size:11.6px;">8&#160;238</div>
<div class="t" style="top:486.80px;right:417.19px;transform:scaleX(0.939);transform-origin:100% 0;font-size:11.6px;">10&#160;740</div>
<div class="t" style="top:486.80px;right:347.36px;transform:scaleX(0.939);transform-origin:100% 0;font-size:11.6px;">147&#160;232</div>
<div class="a" style="left:41px;top:252.50px;width:149px;height:15.90px;background:#fff"></div>
<div class="a" style="left:39px;top:250.50px;width:83px;height:2px;background:#217346"></div>
<div class="a" style="left:39px;top:250.50px;width:2px;height:19.90px;background:#217346"></div>
<div class="a" style="left:39px;top:268.60px;width:78px;height:2px;background:#217346"></div>
<div class="a" style="left:117.5px;top:268.40px;width:5px;height:3.5px;background:#217346"></div>
<div class="t" style="top:253.00px;left:43.20px;transform:scaleX(0.95);transform-origin:0 0;color:#111;font-size:11.7px;">=TRANSPONERA(<span style="color:#4472c4">B2:O10</span>)<span style="display:inline-block;width:1px;height:16px;background:#000;vertical-align:-3.5px;margin-left:2.5px"></span></div>
<svg class="a" style="left:0;top:0" width="1024" height="512" viewBox="0 0 1024 512">
<defs><filter id="sh" x="-20%" y="-20%" width="140%" height="140%"><feGaussianBlur in="SourceAlpha" stdDeviation="2.4"/><feOffset dx="0.5" dy="2" result="o"/><feComponentTransfer><feFuncA type="linear" slope="0.42"/></feComponentTransfer><feMerge><feMergeNode/><feMergeNode in="SourceGraphic"/></feMerge></filter></defs>
<g filter="url(#sh)">
<rect x="32.8" y="247.6" width="159.3" height="30.6" fill="none" stroke="#f73e3f" stroke-width="2.6"/>
</g>
<g filter="url(#sh)" fill="#fb4343" stroke="none">
<path d="M208.7 271 L594 275 L594 267 L620.5 279.7 L594 292.2 L594 283.8 L208.7 280 A4.5 4.5 0 0 1 208.7 271 Z"/>
<path d="M87.4 285.5 A4.7 4.7 0 0 1 96.8 285.5 L95.4 451.3 L104 451.3 L90.6 477.3 L77.5 451.3 L86.1 451.3 Z"/>
<path d="M166.9 280.65 L592.9 458.9 L596 451.2 L615.2 472.6 L586.5 474.7 L589.6 466.8 L163.5 288.95 A4.5 4.5 0 0 1 166.9 280.65 Z"/>
</g>
</svg>
<svg class="a" style="left:80px;top:68px" width="24" height="32" viewBox="0 0 24 32">
<path d="M10.4 1.6 L13.9 5.3 L11.4 5.3 L11.4 8.2 L15.1 8.2 L15.1 5.7 L18.8 9.2 L15.1 12.7 L15.1 10.2 L11.4 10.2 L11.4 13.1 L13.9 13.1 L10.4 16.8 L6.9 13.1 L9.4 13.1 L9.4 10.2 L5.7 10.2 L5.7 12.7 L2 9.2 L5.7 5.7 L5.7 8.2 L9.4 8.2 L9.4 5.3 L6.9 5.3 Z" fill="#000" stroke="#fff" stroke-width="0.7" paint-order="stroke"/>
<path d="M9.4 10 L9.4 25.5 L13 22 L16 28 L18.6 27 L15.8 21 L20.6 21 Z" fill="#fff" stroke="#000" stroke-width="1.1" stroke-linejoin="round"/>
</svg>
</body></html>
